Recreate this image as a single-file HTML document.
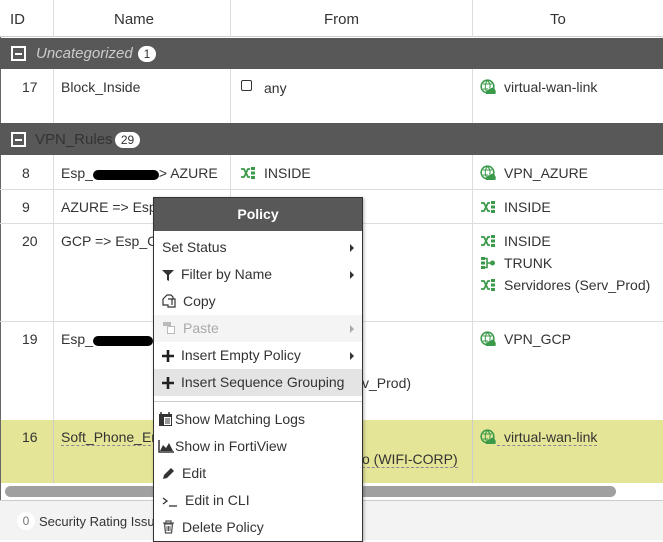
<!DOCTYPE html>
<html><head><style>
*{box-sizing:border-box;margin:0;padding:0}
body{width:663px;height:540px;overflow:hidden;background:#fff;font-family:"Liberation Sans",sans-serif;font-size:14px;color:#333;position:relative}
.a{position:absolute}
.vl{position:absolute;width:1px;background:#ddd}
.hl{position:absolute;height:1px;background:#ddd;left:0;width:663px}
.grp{position:absolute;left:0;width:663px;background:#585858;color:#fff}
.t{position:absolute;white-space:nowrap}
.ic{display:inline-block;vertical-align:-2px;margin-right:8px}
.menu{position:absolute;left:153px;top:197px;width:210px;height:345px;background:#fff;border:1px solid #333;box-shadow:1px 1px 3px rgba(0,0,0,.3)}
.mh{height:33px;background:#585858;color:#fff;text-align:center;line-height:33px;font-weight:bold}
.mi{position:absolute;left:0;width:208px;height:27px;line-height:27px;padding-left:8px;white-space:nowrap}
.mi svg{display:inline-block;vertical-align:-2px;margin-right:7px}
.ar{position:absolute;right:8px;top:10px;width:0;height:0;border-left:4px solid #333;border-top:4px solid transparent;border-bottom:4px solid transparent}
</style></head><body>
<svg width="0" height="0" style="position:absolute">
<defs>
<symbol id="intf" viewBox="0 0 16 14"><path d="M1 3h3l4 8h2M1 11h3l4-8h2" fill="none" stroke="#3a9a4a" stroke-width="1.8"/><rect x="11" y="1" width="4" height="3" fill="#3a9a4a"/><rect x="11" y="5.5" width="4" height="3" fill="#3a9a4a"/><rect x="11" y="10" width="4" height="3" fill="#3a9a4a"/></symbol>
<symbol id="trunk" viewBox="0 0 16 14"><rect x="1" y="1" width="4" height="3" fill="#3a9a4a"/><rect x="1" y="5.5" width="4" height="3" fill="#3a9a4a"/><rect x="1" y="10" width="4" height="3" fill="#3a9a4a"/><path d="M5 2.5h2v9H5M7 7h4" stroke="#3a9a4a" stroke-width="1.6" fill="none"/><circle cx="12.5" cy="7" r="2.5" fill="#3a9a4a"/></symbol>
<symbol id="wan" viewBox="0 0 16 16"><circle cx="7.5" cy="7.5" r="6.3" fill="none" stroke="#3a9a4a" stroke-width="1.6"/><path d="M3 5h9M3 10h5M7.5 1.5c-3 3-3 9 0 12M7.5 1.5c3 3 3 6 2 8" fill="none" stroke="#3a9a4a" stroke-width="1"/><path d="M6 15c0-3 2-5 4-5 1-2 5-2 5 1 1 0 1 4 0 4z" fill="#3a9a4a"/></symbol>
</defs></svg>
<div class="a" style="left:0;top:0;width:1px;height:540px;background:#666"></div>
<!-- header -->
<div class="a" style="left:0;top:0;width:663px;height:37px;background:#fff;border-bottom:1px solid #ccc"></div>
<div class="t" style="left:10px;top:11px;font-size:15px">ID</div>
<div class="t" style="left:114px;top:11px;font-size:15px">Name</div>
<div class="t" style="left:324px;top:11px;font-size:15px">From</div>
<div class="t" style="left:550px;top:11px;font-size:15px">To</div>
<div class="vl" style="left:53px;top:0;height:37px"></div>
<div class="vl" style="left:230px;top:0;height:37px"></div>
<div class="vl" style="left:472px;top:0;height:37px"></div>
<!-- group 1 -->
<div class="grp" style="top:38px;height:31px"></div>
<div class="a" style="left:11px;top:46px;width:15px;height:15px;border:2px solid #fff"><div class="a" style="left:2px;top:5px;width:7px;height:2px;background:#fff"></div></div>
<div class="t" style="left:36px;top:45px;color:#ccc;font-style:italic;font-size:15px">Uncategorized</div>
<div class="a" style="left:138px;top:46px;width:18px;height:16px;border-radius:8px;background:#fff;color:#333;font-size:12px;text-align:center;line-height:16px">1</div>
<!-- row 17 -->
<div class="t" style="left:22px;top:79px">17</div>
<div class="t" style="left:61px;top:79px">Block_Inside</div>
<div class="a" style="left:241px;top:80px;width:11px;height:11px;border:1.5px solid #333;border-radius:2px"></div>
<div class="t" style="left:264px;top:80px">any</div>
<svg class="a" style="left:480px;top:79px" width="16" height="16"><use href="#wan"/></svg>
<div class="t" style="left:504px;top:79px">virtual-wan-link</div>
<!-- group 2 -->
<div class="grp" style="top:123px;height:32px"></div>
<div class="a" style="left:11px;top:132px;width:15px;height:15px;border:2px solid #fff"><div class="a" style="left:2px;top:5px;width:7px;height:2px;background:#fff"></div></div>
<div class="t" style="left:35px;top:131px;font-size:15px">VPN_Rules</div>
<div class="a" style="left:115px;top:132px;width:25px;height:16px;border-radius:8px;background:#fff;color:#333;font-size:12px;text-align:center;line-height:16px">29</div>
<!-- row lines -->
<div class="vl" style="left:53px;top:69px;height:54px"></div><div class="vl" style="left:230px;top:69px;height:54px"></div><div class="vl" style="left:472px;top:69px;height:54px"></div>
<div class="vl" style="left:53px;top:155px;height:328px"></div><div class="vl" style="left:230px;top:155px;height:328px"></div><div class="vl" style="left:472px;top:155px;height:328px"></div>
<div class="hl" style="top:189px"></div><div class="hl" style="top:223px"></div><div class="hl" style="top:321px"></div>
<div class="a" style="left:1px;top:420px;width:662px;height:63px;background:#e5e597"></div>
<div class="vl" style="left:53px;top:420px;height:63px;background:#ccc"></div><div class="vl" style="left:472px;top:420px;height:63px;background:#ccc"></div>
<!-- row 8 -->
<div class="t" style="left:22px;top:165px">8</div>
<div class="t" style="left:61px;top:165px">Esp_<span style="display:inline-block;width:66px;height:10px;background:#000;border-radius:5px;vertical-align:-2px"></span>> AZURE</div>
<svg class="a" style="left:240px;top:166px" width="16" height="14"><use href="#intf"/></svg>
<div class="t" style="left:264px;top:165px">INSIDE</div>
<svg class="a" style="left:480px;top:165px" width="16" height="16"><use href="#wan"/></svg>
<div class="t" style="left:504px;top:165px">VPN_AZURE</div>
<!-- row 9 -->
<div class="t" style="left:22px;top:199px">9</div>
<div class="t" style="left:61px;top:199px">AZURE =&gt; Esp</div>
<svg class="a" style="left:480px;top:200px" width="16" height="14"><use href="#intf"/></svg>
<div class="t" style="left:504px;top:199px">INSIDE</div>
<!-- row 20 -->
<div class="t" style="left:22px;top:233px">20</div>
<div class="t" style="left:61px;top:233px">GCP =&gt; Esp_C</div>
<svg class="a" style="left:480px;top:234px" width="16" height="14"><use href="#intf"/></svg>
<div class="t" style="left:504px;top:233px">INSIDE</div>
<svg class="a" style="left:480px;top:256px" width="16" height="14"><use href="#trunk"/></svg>
<div class="t" style="left:504px;top:255px">TRUNK</div>
<svg class="a" style="left:480px;top:278px" width="16" height="14"><use href="#intf"/></svg>
<div class="t" style="left:504px;top:277px">Servidores (Serv_Prod)</div>
<!-- row 19 -->
<div class="t" style="left:22px;top:331px">19</div>
<div class="t" style="left:61px;top:331px">Esp_<span style="display:inline-block;width:60px;height:10px;background:#000;border-radius:5px;vertical-align:-2px"></span></div>
<div class="t" style="left:362px;top:375px">v_Prod)</div>
<svg class="a" style="left:480px;top:331px" width="16" height="16"><use href="#wan"/></svg>
<div class="t" style="left:504px;top:331px">VPN_GCP</div>
<!-- row 16 -->
<div class="t" style="left:22px;top:429px">16</div>
<div class="t" style="left:61px;top:429px;border-bottom:1px dashed #889">Soft_Phone_Er</div>
<div class="t" style="left:362px;top:451px;border-bottom:1px dashed #889">o (WIFI-CORP)</div>
<svg class="a" style="left:480px;top:429px" width="16" height="16"><use href="#wan"/></svg>
<div class="t" style="left:497px;top:429px;border-bottom:1px dashed #889;padding-left:7px">virtual-wan-link</div>
<!-- scrollbar -->
<div class="a" style="left:5px;top:486px;width:611px;height:11px;border-radius:6px;background:#a0a0a0"></div>
<div class="a" style="left:0;top:500px;width:663px;height:40px;background:#f3f3f3;border-top:1px solid #ccc"></div>
<div class="a" style="left:17px;top:512px;width:18px;height:18px;border-radius:9px;background:#fff;font-size:12px;text-align:center;line-height:18px;color:#777">0</div>
<div class="t" style="left:39px;top:514px;font-size:13px">Security Rating Issu</div>
<!-- menu -->
<div class="menu">
<div class="mh">Policy</div>
<div class="mi" style="top:36px">Set Status<span class="ar"></span></div>
<div class="mi" style="top:63px"><svg width="12" height="12"><path d="M0 1h12L7 6v6L5 11V6z" fill="#333"/></svg>Filter by Name<span class="ar"></span></div>
<div class="mi" style="top:90px"><svg width="14" height="14"><path d="M5 1h4l2 2v2h2v8H6v-2H1V5z" fill="none" stroke="#333" stroke-width="1.2"/><path d="M6 5h4v6" fill="none" stroke="#333" stroke-width="1.2"/></svg>Copy</div>
<div class="mi" style="top:117px;background:#f4f4f4;color:#aaa"><svg width="14" height="14"><path d="M1 1h8v4h4v8H5V5H1z" fill="#bbb"/><rect x="6" y="6" width="6" height="6" fill="#fff"/></svg>Paste<span class="ar" style="border-left-color:#aaa"></span></div>
<div class="mi" style="top:144px"><svg width="12" height="12"><path d="M6 0v12M0 6h12" stroke="#222" stroke-width="2.6"/></svg>Insert Empty Policy<span class="ar"></span></div>
<div class="mi" style="top:171px;background:#e4e4e4"><svg width="12" height="12"><path d="M6 0v12M0 6h12" stroke="#222" stroke-width="2.6"/></svg>Insert Sequence Grouping</div>
<div class="a" style="left:0;top:203px;width:208px;height:1px;background:#ccc"></div>
<div class="mi" style="top:208px;padding-left:4px"><svg width="16" height="14" style="margin-right:1px"><rect x="1" y="2" width="13" height="12" fill="#333"/><rect x="6" y="5" width="7" height="8" fill="#fff"/><path d="M7 7h5M7 9h5M7 11h5" stroke="#333"/><path d="M3 0v3M11 0v3" stroke="#333" stroke-width="1.5"/></svg>Show Matching Logs</div>
<div class="mi" style="top:235px;padding-left:4px"><svg width="16" height="14" style="margin-right:1px"><path d="M1 1v12h15" stroke="#333" stroke-width="1.5" fill="none"/><path d="M2 12l3-6 3 3 3-5 4 8z" fill="#333"/></svg>Show in FortiView</div>
<div class="mi" style="top:262px"><svg width="13" height="13"><path d="M1 12l1-4 7-7 3 3-7 7z" fill="#333"/></svg>Edit</div>
<div class="mi" style="top:289px"><svg width="16" height="12"><path d="M1 3l4 3-4 3" stroke="#333" fill="none" stroke-width="1.3"/><path d="M7 11h8" stroke="#333" stroke-width="1.3"/></svg>Edit in CLI</div>
<div class="mi" style="top:316px"><svg width="13" height="14"><path d="M1 3h11M4 3V1h5v2" stroke="#555" fill="none" stroke-width="1.3"/><path d="M2.5 4h8l-1 9h-6z" fill="none" stroke="#555" stroke-width="1.3"/><path d="M5 6v5M6.5 6v5M8 6v5" stroke="#555"/></svg>Delete Policy</div>
</div>
</body></html>
